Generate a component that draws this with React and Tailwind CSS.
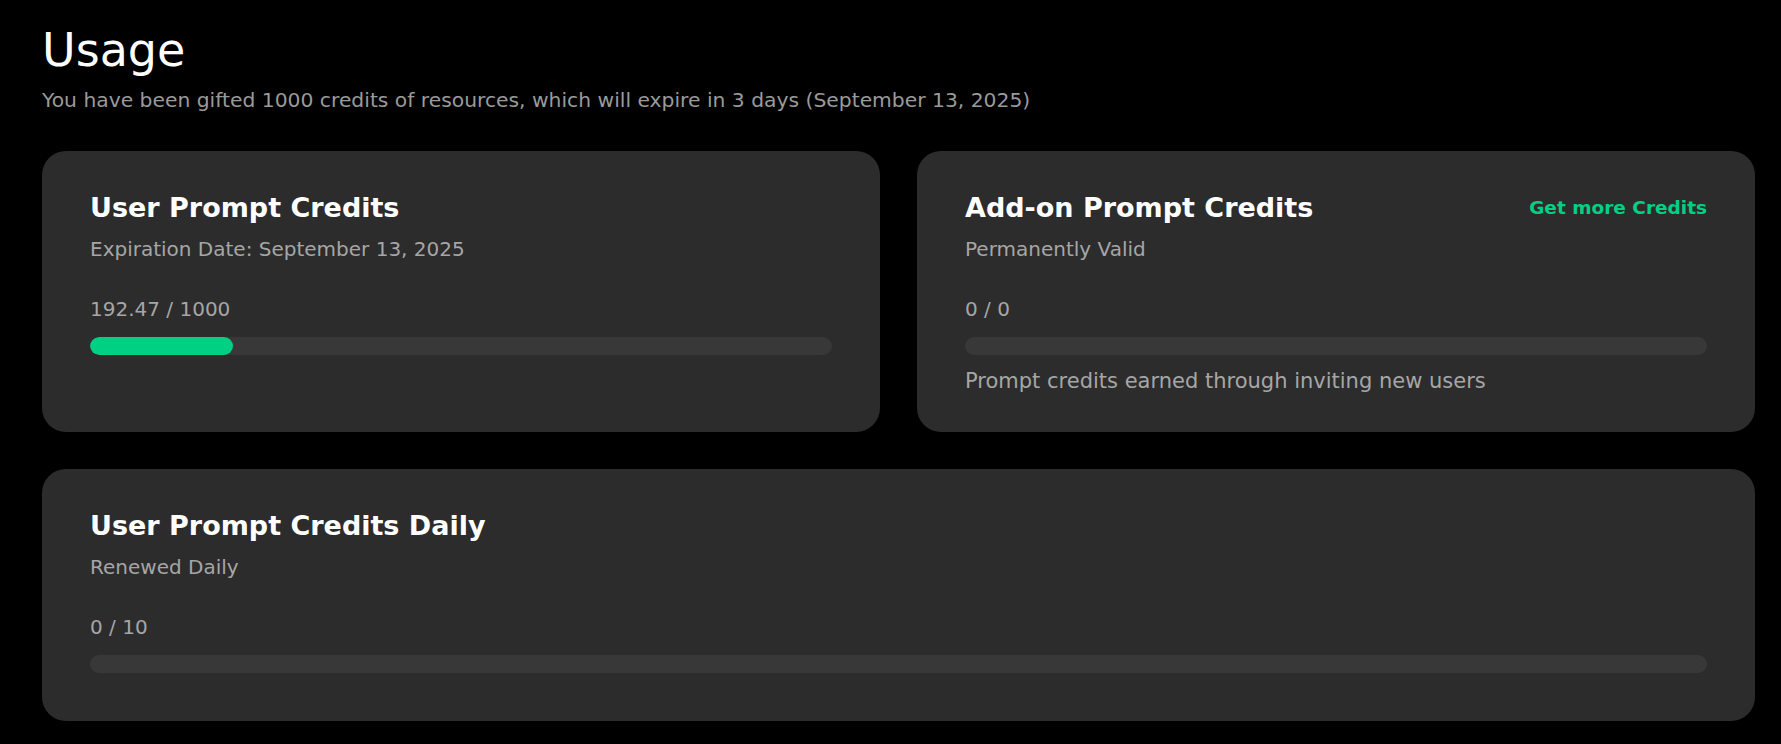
import { useMemo } from "react";

const cards = [
  {
    title: "User Prompt Credits",
    subtitle: "Expiration Date: September 13, 2025",
    used: 192.47,
    total: 1000,
  },
  {
    title: "Add-on Prompt Credits",
    subtitle: "Permanently Valid",
    used: 0,
    total: 0,
    action: "Get more Credits",
    note: "Prompt credits earned through inviting new users",
  },
  {
    title: "User Prompt Credits Daily",
    subtitle: "Renewed Daily",
    used: 0,
    total: 10,
    wide: true,
  },
];

function CreditCard({ title, subtitle, used, total, action, note, wide }) {
  const pct = useMemo(() => (total > 0 ? Math.min(100, (used / total) * 100) : 0), [used, total]);

  return (
    <div
      className={
        "flex flex-col rounded-[24px] bg-[#2c2c2c] px-12 pt-[41px] " +
        (note ? "pb-[37px]" : "pb-[48px]") +
        (wide ? " col-span-2" : "")
      }
    >
      <div className="flex items-center justify-between">
        <h2 className="text-[27px] leading-[32px] font-bold text-white">{title}</h2>
        {action && (
          <button className="text-[18.5px] leading-[32px] font-bold text-[#00d084]">{action}</button>
        )}
      </div>
      <p className="mt-[11px] text-[20px] leading-[28px] text-[#a6a6a6]">{subtitle}</p>
      <p className="mt-[32px] text-[20px] leading-[28px] text-[#a6a6a6]">
        {used} / {total}
      </p>
      <div className="mt-[14px] h-[18px] w-full overflow-hidden rounded-full bg-[#383838]">
        {pct > 0 && <div className="h-full rounded-full bg-[#00d084]" style={{ width: `${pct}%` }} />}
      </div>
      {note && <p className="mt-[12px] text-[21px] leading-[28px] text-[#a6a6a6]">{note}</p>}
    </div>
  );
}

export default function App() {
  return (
    <div className="min-h-screen bg-black pl-[42px] pr-[26px] pt-[22px] pb-6 font-['DejaVu_Sans',sans-serif]">
      <h1 className="text-[46px] leading-[56px] text-white">Usage</h1>
      <p className="mt-[8px] text-[20.3px] leading-[28px] text-[#9a9a9a]">
        You have been gifted 1000 credits of resources, which will expire in 3 days (September 13, 2025)
      </p>
      <div className="mt-[37px] grid grid-cols-2 gap-[37px]">
        {cards.map((c) => (
          <CreditCard key={c.title} {...c} />
        ))}
      </div>
    </div>
  );
}
